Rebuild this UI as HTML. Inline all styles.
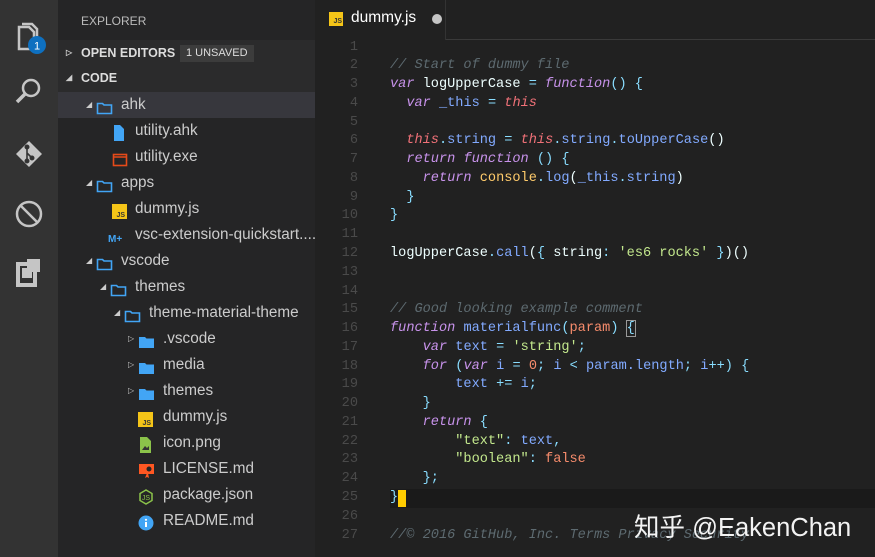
<!DOCTYPE html>
<html><head><meta charset="utf-8"><style>
*{margin:0;padding:0;box-sizing:border-box}
body{width:875px;height:557px;overflow:hidden;background:#212121;position:relative;font-family:"Liberation Sans",sans-serif}
#act{position:absolute;left:0;top:0;width:58px;height:557px;background:#333333}
#side{position:absolute;left:58px;top:0;width:257px;height:557px;background:#252526;color:#cccccc}
.row{position:absolute;left:0;width:257px;height:26px;line-height:26px;font-size:15.3px;white-space:nowrap}
.hdr{font-size:12.5px;font-weight:bold;color:#ddd}
.arr{position:absolute;font-size:8px;color:#ccc;top:0}
.ic{position:absolute;top:6px}
#tabbar{position:absolute;left:315px;top:0;width:560px;height:40px;background:#212121}
#tab{position:absolute;left:0;top:0;width:131px;height:40px;background:#212121}
#tabline{position:absolute;left:131px;top:39px;width:429px;height:1px;background:#3a3a3a}
#tabedge{position:absolute;left:130px;top:0;width:1px;height:40px;background:#333}
pre{position:absolute;font-family:"Liberation Mono",monospace;font-size:13.6px;line-height:18.77px;white-space:pre}
#nums{left:318px;top:38.6px;width:40px;text-align:right;color:#4a4a4a}
#code{left:390px;top:38.6px;color:#eeffff}
.c{color:#5d6a70;font-style:italic}.k{color:#c792ea;font-style:italic}.t{color:#f07178;font-style:italic}
.p{color:#89ddff}.b{color:#82aaff}.s{color:#c3e88d}.y{color:#ffcb6b}.o{color:#f78c6c}.r{color:#ff5370}
#hl{position:absolute;left:390px;top:489px;width:485px;height:19px;background:#1a1a1a}
#cur{position:absolute;left:398px;top:490px;width:8px;height:17px;background:#ffcc00}
#wm{position:absolute;left:634px;top:507px;color:#fff;font-size:25.5px;font-family:"Liberation Sans","Noto Sans CJK SC",sans-serif;opacity:.95}
</style></head><body>
<div id="act">
<svg width="58" height="300" viewBox="0 0 58 300">
<g fill="none" stroke="#c5c5c5" stroke-width="2.5">
<path d="M22 24h10l5 5v13"/><path d="M19 27h10l5 5v17H19z" fill="#333"/>
<circle cx="31" cy="88" r="8"/><path d="M25 94l-8 8" stroke-width="3.5"/>
<circle cx="29" cy="214" r="12"/><path d="M21 206l16 16"/>
</g>
<circle cx="37" cy="45" r="9" fill="#0e70c0"/><text x="37" y="49.5" fill="#fff" font-size="11" text-anchor="middle" font-family="Liberation Sans">1</text>
<path d="M29 141l13 13-13 13-13-13z" fill="#c5c5c5"/>
<g stroke="#333" stroke-width="1.6" fill="#333"><path d="M27 147v14M27 153l5 5" fill="none"/><circle cx="27" cy="147" r="1.7"/><circle cx="27" cy="161" r="1.7"/><circle cx="32" cy="158" r="1.7"/></g>
<path d="M16 262h11v-3h13v13h-3v15H16zM20 266v17h13v-11h-6v-6z" fill="#c5c5c5" fill-rule="evenodd"/>
<rect x="22" y="268" width="10" height="10" fill="#c5c5c5"/>
</svg>
</div>
<div id="side">
<div class="row" style="top:8px;font-size:12px;color:#bbb;left:23px">EXPLORER</div>
<div style="position:absolute;left:0;top:40px;width:257px;height:52px;background:#2b2b2c"></div>
<div class="row hdr" style="top:40px"><span class="arr" style="left:8px">▷</span><span style="position:absolute;left:23px">OPEN EDITORS</span><span style="position:absolute;left:122px;top:5px;height:17px;line-height:17px;padding:0 6px;background:#3c3c3c;font-size:11px;font-weight:normal;color:#ddd">1 UNSAVED</span></div>
<div class="row hdr" style="top:65px"><span class="arr" style="left:8px">◢</span><span style="position:absolute;left:23px">CODE</span></div>
<div style="position:absolute;left:0;top:92px;width:257px;height:26px;background:#37373d"></div>
<div id="tree"></div>
</div>
<div id="tabbar"><div id="tab">
<span style="position:absolute;left:14px;top:12px;width:14px;height:14px;background:#f5c518;font-size:7px;line-height:19px;color:#333;text-align:right;padding-right:1px;font-weight:bold">JS</span>
<span style="position:absolute;left:36px;top:9px;font-size:15.5px;color:#fff">dummy.js</span>
<span style="position:absolute;left:117px;top:14px;width:10px;height:10px;border-radius:50%;background:#c5c5c5"></span>
</div><div id="tabedge"></div><div id="tabline"></div></div>
<div id="hl"></div>
<pre id="nums">1
2
3
4
5
6
7
8
9
10
11
12
13
14
15
16
17
18
19
20
21
22
23
24
25
26
27</pre>
<div id="cur"></div>
<pre id="code">

<span class="c">// Start of dummy file</span>
<span class="k">var</span> logUpperCase <span class="p">=</span> <span class="k">function</span><span class="p">() {</span>
  <span class="k">var</span> <span class="b">_this</span> <span class="p">=</span> <span class="t">this</span>

  <span class="t">this</span><span class="p">.</span><span class="b">string</span> <span class="p">=</span> <span class="t">this</span><span class="p">.</span><span class="b">string</span><span class="p">.</span><span class="b">toUpperCase</span>()
  <span class="k">return</span> <span class="k">function</span> <span class="p">() {</span>
    <span class="k">return</span> <span class="y">console</span><span class="p">.</span><span class="b">log</span>(<span class="b">_this</span><span class="p">.</span><span class="b">string</span>)
  <span class="p">}</span>
<span class="p">}</span>

logUpperCase<span class="p">.</span><span class="b">call</span>(<span class="p">{</span> string<span class="p">:</span> <span class="s">'es6 rocks'</span> <span class="p">}</span>)()


<span class="c">// Good looking example comment</span>
<span class="k">function</span> <span class="b">materialfunc</span><span class="p">(</span><span class="o">param</span><span class="p">)</span> <span class="p" style="outline:1px solid #999">{</span>
    <span class="k">var</span> <span class="b">text</span> <span class="p">=</span> <span class="s">'string'</span><span class="p">;</span>
    <span class="k">for</span> <span class="p">(</span><span class="k">var</span> <span class="b">i</span> <span class="p">=</span> <span class="o">0</span><span class="p">;</span> <span class="b">i</span> <span class="p">&lt;</span> <span class="b">param.length</span><span class="p">;</span> <span class="b">i</span><span class="p">++)</span> <span class="p">{</span>
        <span class="b">text</span> <span class="p">+=</span> <span class="b">i</span><span class="p">;</span>
    <span class="p">}</span>
    <span class="k">return</span> <span class="p">{</span>
        <span class="s">"text"</span><span class="p">:</span> <span class="b">text</span><span class="p">,</span>
        <span class="s">"boolean"</span><span class="p">:</span> <span class="o">false</span>
    <span class="p">};</span>
<span class="p">}</span>

<span class="c">//© 2016 GitHub, Inc. Terms Privacy Security</span></pre>
<div id="wm">知乎 @EakenChan</div>
<script>
var items=[
[92,'▲',28,'fo',38,'ahk',63],
[118,'',0,'fb',54,'utility.ahk',77],
[144,'',0,'ex',54,'utility.exe',77],
[170,'▲',28,'fo',38,'apps',63],
[196,'',0,'js',54,'dummy.js',77],
[222,'',0,'md',50,'vsc-extension-quickstart....',77],
[248,'▲',28,'fo',38,'vscode',63],
[274,'▲',42,'fo',52,'themes',77],
[300,'▲',56,'fo',66,'theme-material-theme',91],
[326,'▶',70,'ff',80,'.vscode',105],
[352,'▶',70,'ff',80,'media',105],
[378,'▶',70,'ff',80,'themes',105],
[404,'',0,'js',80,'dummy.js',105],
[430,'',0,'img',80,'icon.png',105],
[456,'',0,'lic',80,'LICENSE.md',105],
[482,'',0,'pk',80,'package.json',105],
[508,'',0,'info',80,'README.md',105]];
var ic={
fo:'<svg width="17" height="14"><path d="M1.5 2.5h5l1.5 1.5h7.5v8.5h-14z" fill="none" stroke="#42a5f5" stroke-width="1.6"/></svg>',
ff:'<svg width="17" height="14"><path d="M1 2h6l1.5 1.5H16V13H1z" fill="#42a5f5"/></svg>',
fb:'<svg width="14" height="16"><path d="M2 0h6l4 4v12H2z" fill="#42a5f5"/></svg>',
ex:'<svg width="16" height="14"><rect x="1.5" y="1.5" width="13" height="11" fill="none" stroke="#e64a19" stroke-width="1.6"/><path d="M1.5 4h13" stroke="#e64a19" stroke-width="1.5"/></svg>',
js:'<svg width="15" height="15"><rect width="15" height="15" fill="#f5c518"/><text x="13" y="13" font-size="7" font-weight="bold" text-anchor="end" fill="#333" font-family="Liberation Sans">JS</text></svg>',
md:'<svg width="20" height="14"><text x="0" y="11" font-size="10" font-weight="bold" fill="#42a5f5" font-family="Liberation Sans">M+</text></svg>',
img:'<svg width="14" height="16"><path d="M2 0h7l4 4v12H2z" fill="#8bc34a"/><path d="M4 13l3-4 2 2 2-2v4z" fill="#333"/></svg>',
lic:'<svg width="17" height="16"><rect x="1" y="1" width="15" height="10" fill="#ff5722"/><path d="M9 10l-2 5 2-1 2 1-1-5z" fill="#ff5722"/><circle cx="11" cy="6" r="2.5" fill="#252526"/></svg>',
pk:'<svg width="16" height="16"><path d="M8 1l6 3.5v7L8 15l-6-3.5v-7z" fill="none" stroke="#8bc34a" stroke-width="1.5"/><text x="8" y="11" font-size="7" text-anchor="middle" fill="#8bc34a" font-family="Liberation Sans">JS</text></svg>',
info:'<svg width="16" height="16"><circle cx="8" cy="8" r="7.5" fill="#42a5f5"/><rect x="7" y="7" width="2" height="5" fill="#fff"/><circle cx="8" cy="4.8" r="1.1" fill="#fff"/></svg>'};
var h='';items.forEach(function(a){h+='<div class="row" style="top:'+a[0]+'px">'+(a[1]?'<span class="arr" style="left:'+a[2]+'px">'+(a[1]=='▲'?'◢':'▷')+'</span>':'')+'<span class="ic" style="left:'+a[4]+'px">'+ic[a[3]]+'</span><span style="position:absolute;left:'+a[6]+'px">'+a[5]+'</span></div>';});
document.getElementById('tree').innerHTML=h;
</script>
</body></html>
